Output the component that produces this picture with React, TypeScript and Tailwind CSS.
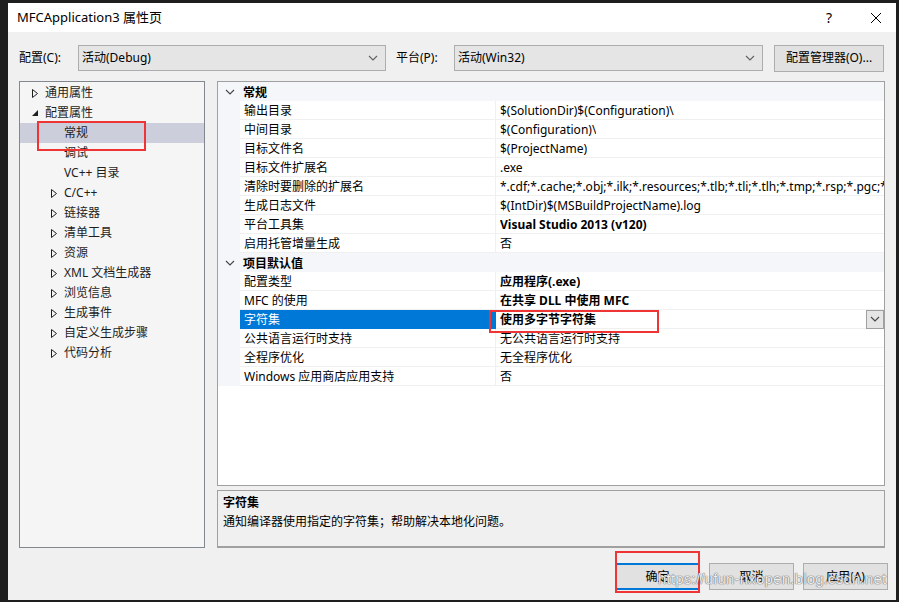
import React from "react";

const FONT = '"Noto Sans", "Noto Sans CJK SC", sans-serif';

type TreeItem = { label: string; level: number; arrow?: "open" | "closed"; selected?: boolean };

const treeItems: TreeItem[] = [
  { label: "通用属性", level: 0, arrow: "closed" },
  { label: "配置属性", level: 0, arrow: "open" },
  { label: "常规", level: 1, selected: true },
  { label: "调试", level: 1 },
  { label: "VC++ 目录", level: 1 },
  { label: "C/C++", level: 1, arrow: "closed" },
  { label: "链接器", level: 1, arrow: "closed" },
  { label: "清单工具", level: 1, arrow: "closed" },
  { label: "资源", level: 1, arrow: "closed" },
  { label: "XML 文档生成器", level: 1, arrow: "closed" },
  { label: "浏览信息", level: 1, arrow: "closed" },
  { label: "生成事件", level: 1, arrow: "closed" },
  { label: "自定义生成步骤", level: 1, arrow: "closed" },
  { label: "代码分析", level: 1, arrow: "closed" },
];

type Prop = { name: string; value: string; bold?: boolean; selected?: boolean };
type Group = { title: string; rows: Prop[] };

const groups: Group[] = [
  {
    title: "常规",
    rows: [
      { name: "输出目录", value: "$(SolutionDir)$(Configuration)\\" },
      { name: "中间目录", value: "$(Configuration)\\" },
      { name: "目标文件名", value: "$(ProjectName)" },
      { name: "目标文件扩展名", value: ".exe" },
      {
        name: "清除时要删除的扩展名",
        value: "*.cdf;*.cache;*.obj;*.ilk;*.resources;*.tlb;*.tli;*.tlh;*.tmp;*.rsp;*.pgc;*.pgd;*.meta;$(TargetPath)",
      },
      { name: "生成日志文件", value: "$(IntDir)$(MSBuildProjectName).log" },
      { name: "平台工具集", value: "Visual Studio 2013 (v120)", bold: true },
      { name: "启用托管增量生成", value: "否" },
    ],
  },
  {
    title: "项目默认值",
    rows: [
      { name: "配置类型", value: "应用程序(.exe)", bold: true },
      { name: "MFC 的使用", value: "在共享 DLL 中使用 MFC", bold: true },
      { name: "字符集", value: "使用多字节字符集", bold: true, selected: true },
      { name: "公共语言运行时支持", value: "无公共语言运行时支持" },
      { name: "全程序优化", value: "无全程序优化" },
      { name: "Windows 应用商店应用支持", value: "否" },
    ],
  },
];

const Chevron = ({ color = "#606060" }: { color?: string }) => (
  <svg width="10" height="6" viewBox="0 0 10 6">
    <polyline points="1,1 5,5 9,1" fill="none" stroke={color} strokeWidth="1.1" />
  </svg>
);

const TreeArrow = ({ kind }: { kind: "open" | "closed" }) =>
  kind === "closed" ? (
    <svg width="6" height="9" viewBox="0 0 6 9">
      <polygon points="0.5,0.5 5.5,4.5 0.5,8.5" fill="none" stroke="#1e1e1e" strokeWidth="1" />
    </svg>
  ) : (
    <svg width="6" height="6" viewBox="0 0 6 6">
      <polygon points="6,0 6,6 0,6" fill="#1e1e1e" />
    </svg>
  );

const Select = ({ text, width }: { text: string; width: string }) => (
  <div className={`${width} h-[26px] flex items-center justify-between border border-[#adadad] bg-[#e5e5e5] pl-[3px] pr-[7px]`}>
    <span className="text-[12px] text-[#000]">{text}</span>
    <Chevron />
  </div>
);

const Button = ({ label, primary }: { label: string; primary?: boolean }) => (
  <div
    className={`w-[85px] h-[27px] flex items-center justify-center text-[12px] text-black bg-[#e1e1e1] ${
      primary ? "border-2 border-[#0078d7]" : "border border-[#adadad]"
    }`}
  >
    {label}
  </div>
);

export default function App() {
  return (
    <div className="w-[899px] h-[602px] bg-[#1e1e1e] pt-[3px] pl-[8px] overflow-hidden" style={{ fontFamily: FONT }}>
      <div className="w-[888px] h-[597px] flex flex-col relative">
        {/* title bar */}
        <div className="h-[29px] bg-white flex items-center pl-[9px] pr-[14px]">
          <span className="text-[13px] text-black flex-1">MFCApplication3 属性页</span>
          <span className="text-[14px] text-black mr-[38px]">?</span>
          <svg width="12" height="12" viewBox="0 0 12 12">
            <path d="M1 1 L11 11 M11 1 L1 11" stroke="#000" strokeWidth="1" />
          </svg>
        </div>

        {/* body */}
        <div className="flex-1 bg-[#f0f0f0] pl-[11px] pr-[8px] pt-[13px] flex flex-col">
          <div className="h-[26px] flex items-center">
            <span className="w-[59px] text-[12px] text-black">配置(C):</span>
            <Select text="活动(Debug)" width="w-[308px]" />
            <span className="ml-[10px] w-[58px] text-[12px] text-black">平台(P):</span>
            <Select text="活动(Win32)" width="w-[309px]" />
            <div className="ml-[11px] w-[110px] h-[27px] flex items-center justify-center border border-[#adadad] bg-[#e1e1e1] text-[12px] text-black">
              配置管理器(O)...
            </div>
          </div>

          <div className="flex mt-[10px] h-[467px]">
            {/* tree */}
            <div className="w-[186px] h-full border border-[#828790] bg-[#f5f5f5] pt-[1px] relative">
              {treeItems.map((t) => (
                <div
                  key={t.label}
                  className={`h-[20px] flex items-center text-[12px] text-[#1e1e1e] ${t.selected ? "bg-[#cccedb]" : ""}`}
                >
                  <div className={`${t.level === 0 ? "w-[25px] pl-[12px]" : "w-[44px] pl-[31px]"} flex items-center`}>
                    {t.arrow && <TreeArrow kind={t.arrow} />}
                  </div>
                  <span>{t.label}</span>
                </div>
              ))}
              <div className="absolute left-[17px] top-[39px] w-[109px] h-[30px] border-2 border-[#ee3434]" />
            </div>

            {/* right */}
            <div className="ml-[12px] w-[668px] h-full flex flex-col">
              <div className="h-[405px] border border-[#a0a0a0] bg-white overflow-hidden relative">
                {groups.map((g) => (
                  <div key={g.title}>
                    <div className="h-[19px] flex items-center bg-[#f4f6f9] text-[12px] font-bold text-black">
                      <div className="w-[22px] flex justify-center pl-[1px]">
                        <Chevron color="#444" />
                      </div>
                      <span className="pl-[3px] pt-[2px]">{g.title}</span>
                    </div>
                    {g.rows.map((r) => (
                      <div key={r.name} className="h-[19px] flex text-[12px]">
                        <div className="w-[22px] bg-[#f4f6f9]" />
                        <div
                          className={`w-[256px] flex items-center pl-[4px] pt-[2px] border-b border-r ${
                            r.selected
                              ? "bg-[#0078d7] text-white border-[#0078d7]"
                              : "text-black border-[#f0f0f0]"
                          }`}
                        >
                          {r.name}
                        </div>
                        <div
                          className={`flex-1 min-w-0 flex items-center justify-between pl-[4px] border-b border-[#f0f0f0] text-black ${
                            r.bold ? "font-bold" : ""
                          }`}
                        >
                          <span className="pt-[2px] whitespace-nowrap overflow-hidden">{r.value}</span>
                          {r.selected && (
                            <div className="w-[18px] h-[19px] shrink-0 flex items-center justify-center border border-[#a0a0a0] bg-[#e5e5e5]">
                              <Chevron color="#444" />
                            </div>
                          )}
                        </div>
                      </div>
                    ))}
                  </div>
                ))}
                <div className="absolute left-[271px] top-[228px] w-[170px] h-[23px] border-2 border-[#ee3434]" />
              </div>

              <div className="mt-[4px] h-[58px] border border-[#a0a0a0] border-b-2 bg-[#f0f0f0] px-[5px] pt-[2px] text-[12px] text-black">
                <div className="font-bold leading-[19px]">字符集</div>
                <div className="leading-[19px]">通知编译器使用指定的字符集；帮助解决本地化问题。</div>
              </div>
            </div>
          </div>

          {/* buttons */}
          <div className="mt-[15px] flex justify-end gap-[9px] relative">
            <Button label="确定" primary />
            <Button label="取消" />
            <Button label="应用(A)" />
            <div className="absolute left-[596px] top-[-12px] w-[85px] h-[42px] border-2 border-[#ee3434]" />
            <div
              className="absolute left-[639px] top-[5px] whitespace-nowrap text-[15px] text-white/90 tracking-[0.2px] [text-shadow:0_0_1px_#555,0_0_1px_#555]"
              style={{ fontFamily: '"Liberation Sans", sans-serif' }}
            >
              https://ufun-nxopen.blog.csdn.net
            </div>
          </div>
        </div>
      </div>
    </div>
  );
}
